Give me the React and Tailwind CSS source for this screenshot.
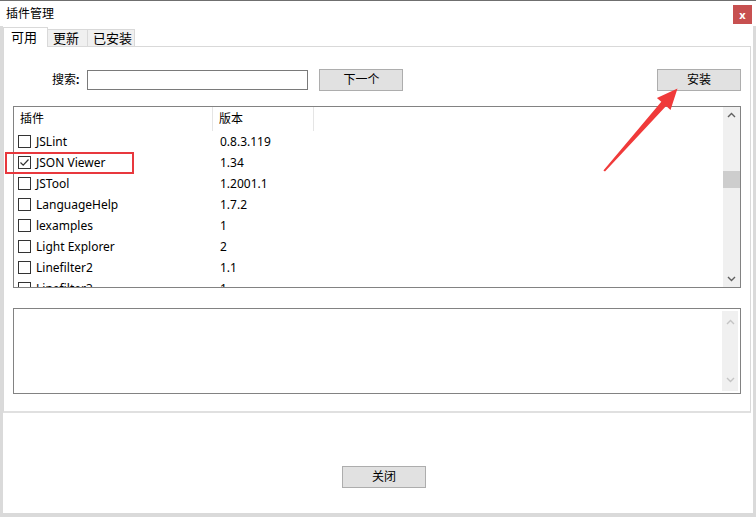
import { useState } from "react"

const plugins = [
  { name: "JSLint", ver: "0.8.3.119", on: false },
  { name: "JSON Viewer", ver: "1.34", on: true },
  { name: "JSTool", ver: "1.2001.1", on: false },
  { name: "LanguageHelp", ver: "1.7.2", on: false },
  { name: "lexamples", ver: "1", on: false },
  { name: "Light Explorer", ver: "2", on: false },
  { name: "Linefilter2", ver: "1.1", on: false },
  { name: "Linefilter3", ver: "1", on: false },
]

const tabs = [
  { label: "可用", w: "w-[45px]" },
  { label: "更新", w: "w-[41px]" },
  { label: "已安装", w: "w-[48px]" },
]

function Check({ on }) {
  return (
    <span className="w-[13px] h-[13px] border border-[#333] bg-white flex items-center justify-center shrink-0">
      {on && (
        <svg width="11" height="11" viewBox="0 0 11 11">
          <path d="M1.5 5.5 L4.2 8.2 L9.5 2.5" stroke="#333" strokeWidth="1.2" fill="none" />
        </svg>
      )}
    </span>
  )
}

function Btn({ children, className = "" }) {
  return (
    <button className={"h-[22px] bg-[#e1e1e1] border border-[#adadad] text-[12px] text-black " + className}>
      {children}
    </button>
  )
}

function Arrow({ dir }) {
  return (
    <svg width="9" height="6" viewBox="0 0 9 6">
      <path d={dir === "up" ? "M1 5 L4.5 1.5 L8 5" : "M1 1 L4.5 4.5 L8 1"} stroke="currentColor" strokeWidth="1.4" fill="none" />
    </svg>
  )
}

export default function App() {
  const [tab, setTab] = useState(0)
  const [query, setQuery] = useState("")

  return (
    <div className="relative w-[756px] h-[517px] bg-white border-t border-[#6f6f6f] flex flex-col font-['Noto_Sans','Noto_Sans_CJK_SC',sans-serif] text-[12px] text-black overflow-hidden">
      {/* title bar */}
      <div className="h-[25px] flex items-center justify-between pl-[6px] pr-[4px] shrink-0">
        <span className="text-[12px] leading-none">插件管理</span>
        <span className="w-[19px] h-[19px] bg-[#c75050] text-white text-[11px] font-bold flex items-center justify-center leading-none mt-[2px]">x</span>
      </div>

      {/* body */}
      <div className="flex-1 flex flex-col border-l-[3px] border-r-[3px] border-b-[4px] border-[#dadada]">
        {/* tabs */}
        <div className="flex items-end h-[20px] shrink-0">
          {tabs.map((t, i) => (
            <div
              key={t.label}
              onClick={() => setTab(i)}
              className={
                "border border-[#d9d9d9] border-b-0 flex items-center text-[13px] leading-none " +
                t.w +
                (tab === i
                  ? " h-[20px] bg-white pl-[7px] relative z-10 -mb-px"
                  : " h-[17px] bg-[#f0f0f0] pl-[5px] -ml-px")
              }
            >
              {t.label}
            </div>
          ))}
        </div>

        {/* panel */}
        <div className="h-[367px] mr-[2px] border border-[#d9d9d9] border-b-2 border-b-[#e0e0e0] flex flex-col px-[9px] shrink-0">
          <div className="flex items-center mt-[22px] h-[22px]">
            <span className="ml-[39px] text-[12px]">搜索<b>:</b></span>
            <input
              value={query}
              onChange={e => setQuery(e.target.value)}
              className="ml-[8px] w-[221px] h-[20px] border border-[#7a7a7a] outline-none px-1"
            />
            <Btn className="ml-[11px] w-[84px]">下一个</Btn>
            <div className="flex-1" />
            <Btn className="w-[84px]">安装</Btn>
          </div>

          {/* list */}
          <div className="mt-[15px] h-[182px] border border-[#828282] flex overflow-hidden">
            <div className="flex-1 flex flex-col overflow-hidden">
              <div className="h-[24px] flex items-center shrink-0">
                <div className="w-[199px] pl-[6px] border-r border-[#e5e5e5] h-full flex items-center">插件</div>
                <div className="w-[101px] pl-[6px] border-r border-[#e5e5e5] h-full flex items-center">版本</div>
              </div>
              {plugins.map(p => (
                <div key={p.name} className="h-[21px] flex items-center shrink-0">
                  <div className="w-[199px] pl-[4px] flex items-center gap-[5px]">
                    <Check on={p.on} />
                    <span>{p.name}</span>
                  </div>
                  <div className="pl-[7px]">{p.ver}</div>
                </div>
              ))}
            </div>
            <div className="w-[17px] bg-[#f0f0f0] flex flex-col items-center justify-between py-[5px] text-[#606060] relative">
              <Arrow dir="up" />
              <div className="absolute left-0 right-0 top-[64px] h-[17px] bg-[#cdcdcd]" />
              <Arrow dir="down" />
            </div>
          </div>

          {/* description */}
          <div className="mt-[20px] h-[86px] border border-[#828282] flex justify-end p-[2px]">
            <div className="w-[16px] bg-[#f0f0f0] flex flex-col items-center justify-between py-[8px] text-[#c4c4c4]">
              <Arrow dir="up" />
              <Arrow dir="down" />
            </div>
          </div>
        </div>

        <div className="flex-1 flex items-start pl-[339px] pt-[53px]">
          <Btn className="w-[84px]">关闭</Btn>
        </div>
      </div>

      {/* annotations */}
      <div className="absolute left-[5px] top-[151px] w-[129px] h-[22px] border-2 border-[#e8383d] pointer-events-none" />
      <svg className="absolute left-0 top-0 pointer-events-none" width="756" height="517">
        <polygon
          points="603.4,169.6 661.3,100.7 656.9,97.0 677.5,87.5 670.5,108.9 666.1,105.1 605,170.6"
          fill="#f03a3a"
        />
      </svg>
    </div>
  )
}
